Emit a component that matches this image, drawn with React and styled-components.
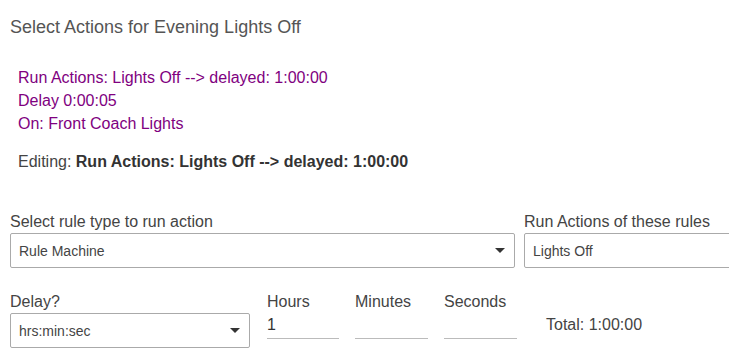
import React from "react";
import styled, { createGlobalStyle } from "styled-components";

const Global = createGlobalStyle`
  html, body { margin: 0; padding: 0; background: #fff; }
  body { font-family: "Liberation Sans", Arial, sans-serif; color: #444; }
`;

const Page = styled.div`
  width: 729px;
  height: 356px;
  overflow: hidden;
  padding: 0 0 0 10px;
  box-sizing: border-box;
`;

const Title = styled.div`
  font-size: 18px;
  line-height: 22px;
  color: #555;
  padding-top: 16px;
`;

const Summary = styled.div`
  margin-top: 28px;
  padding-left: 8px;
  font-size: 16px;
  line-height: 23px;
  color: #800080;
`;

const Editing = styled.div`
  margin-top: 15px;
  padding-left: 8px;
  font-size: 16px;
  line-height: 23px;
  color: #444;
  b { font-weight: bold; color: #333; }
`;

const Row = styled.div`
  display: flex;
  align-items: flex-start;
  gap: ${(p) => p.$gap || 0}px;
  margin-top: ${(p) => p.$top || 0}px;
`;

const Field = styled.div`
  display: flex;
  flex-direction: column;
  width: ${(p) => p.$w}px;
  margin-left: ${(p) => p.$ml || 0}px;
  flex: none;
`;

const Label = styled.div`
  font-size: 16px;
  line-height: 20px;
  color: #444;
  white-space: nowrap;
`;

const SelectBox = styled.div`
  margin-top: 1px;
  height: 35px;
  box-sizing: border-box;
  border: 1px solid #aaa;
  border-radius: 2px;
  display: flex;
  align-items: center;
  justify-content: space-between;
  padding: 0 9px 0 8px;
  font-size: 14px;
  color: #444;
`;

const Arrow = styled.span`
  width: 0;
  height: 0;
  border-left: 5px solid transparent;
  border-right: 5px solid transparent;
  border-top: 5px solid #333;
`;

const TimeInput = styled.div`
  height: 27px;
  box-sizing: border-box;
  border-bottom: 1px solid #bbb;
  font-size: 16px;
  line-height: 26px;
  color: #333;
`;

const Total = styled.div`
  margin-top: 23px;
  margin-left: 13px;
  font-size: 16px;
  line-height: 20px;
  color: #444;
  white-space: nowrap;
`;

export default function App() {
  return (
    <Page>
      <Global />
      <Title>Select Actions for Evening Lights Off</Title>
      <Summary>
        <div>Run Actions: Lights Off --&gt; delayed: 1:00:00</div>
        <div>Delay 0:00:05</div>
        <div>On: Front Coach Lights</div>
      </Summary>
      <Editing>
        Editing: <b>Run Actions: Lights Off --&gt; delayed: 1:00:00</b>
      </Editing>
      <Row $top={39} $gap={9}>
        <Field $w={505}>
          <Label>Select rule type to run action</Label>
          <SelectBox>
            <span>Rule Machine</span>
            <Arrow />
          </SelectBox>
        </Field>
        <Field $w={260}>
          <Label>Run Actions of these rules</Label>
          <SelectBox>
            <span>Lights Off</span>
          </SelectBox>
        </Field>
      </Row>
      <Row $top={24} $gap={16}>
        <Field $w={240}>
          <Label>Delay?</Label>
          <SelectBox>
            <span>hrs:min:sec</span>
            <Arrow />
          </SelectBox>
        </Field>
        <Field $w={72} $ml={1}>
          <Label>Hours</Label>
          <TimeInput>1</TimeInput>
        </Field>
        <Field $w={73}>
          <Label>Minutes</Label>
          <TimeInput />
        </Field>
        <Field $w={73}>
          <Label>Seconds</Label>
          <TimeInput />
        </Field>
        <Total>Total: 1:00:00</Total>
      </Row>
    </Page>
  );
}
